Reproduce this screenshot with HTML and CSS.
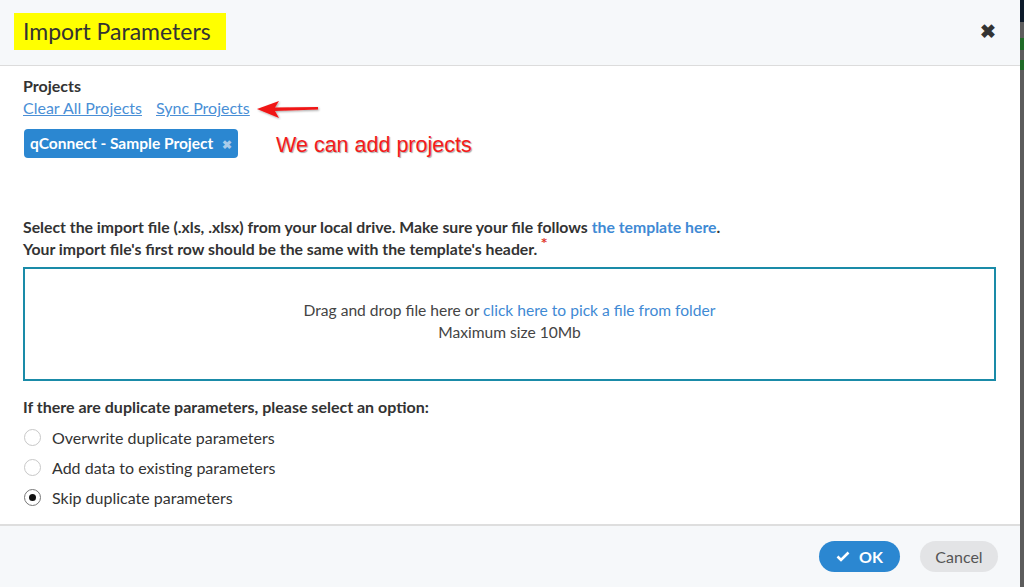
FILE: index.html
```html
<!DOCTYPE html>
<html>
<head>
<meta charset="utf-8">
<link rel="stylesheet" href="styles.css">
</head>
<body>
<div class="screen">
  <div class="modal">
    <header class="modal-header">
      <h1 class="title">Import Parameters</h1>
      <span class="close">&#10006;</span>
    </header>
    <main class="modal-body">
      <div class="label">Projects</div>
      <div class="links">
        <a class="link">Clear All Projects</a>
        <a class="link">Sync Projects</a>
        <svg class="arrow" width="66" height="20" viewBox="0 0 66 20"><defs><filter id="sh" x="-20%" y="-50%" width="140%" height="200%"><feDropShadow dx="1" dy="1" stdDeviation="1" flood-color="#000" flood-opacity="0.35"/></filter></defs><path d="M1 9 L23 1 L19 7.5 L62 7 L62 9.5 L19 11 L23 18 Z" fill="#f01818" filter="url(#sh)"/></svg>
      </div>
      <div class="tags">
        <span class="tag">qConnect - Sample Project <span class="tag-x">&#10006;</span></span>
        <span class="note">We can add projects</span>
      </div>
      <p class="instr">Select the import file (.xls, .xlsx) from your local drive. Make sure your file follows <a class="blue">the template here</a>.<br>Your import file's first row should be the same with the template's header. <span class="req">*</span></p>
      <div class="drop">
        <div>Drag and drop file here or <a class="blue">click here to pick a file from folder</a></div>
        <div>Maximum size 10Mb</div>
      </div>
      <div class="label dup">If there are duplicate parameters, please select an option:</div>
      <ul class="radios">
        <li><span class="radio"></span>Overwrite duplicate parameters</li>
        <li><span class="radio"></span>Add data to existing parameters</li>
        <li><span class="radio on"></span>Skip duplicate parameters</li>
      </ul>
    </main>
    <footer class="modal-footer">
      <button class="btn ok"><svg width="14" height="11" viewBox="0 0 14 11"><path d="M1.5 5.5 L5 9 L12.5 1.5" fill="none" stroke="#fff" stroke-width="2.6"/></svg>OK</button>
      <button class="btn cancel">Cancel</button>
    </footer>
  </div>
  <div class="edge">
    <div class="e1"></div><div class="e2"></div><div class="e3"></div><div class="e4"></div><div class="e5"></div>
  </div>
</div>
</body>
</html>
```
FILE: styles.css
```css
* { box-sizing: border-box; }
html, body { margin: 0; padding: 0; }
body { font-family: Lato, "Open Sans", sans-serif; color: #333; background: #fff; }
.screen { display: flex; width: 1024px; height: 587px; overflow: hidden; }
.modal { width: 1020px; display: flex; flex-direction: column; background: #fff; }
.modal-header { height: 66px; background: #f6f8fa; border-bottom: 1px solid #dcdcdc; display: flex; align-items: center; justify-content: space-between; padding: 0 24px 0 14px; flex: none; }
.title { margin: 0; background: #ffff00; font-weight: 400; font-size: 23px; color: #333; height: 37px; line-height: 37px; padding: 0 15px 0 9px; margin-top: -2px; }
.close { font-size: 19px; color: #333; font-weight: 700; margin-top: -4px; }
.modal-body { flex: 1; padding: 10px 23px 0 23px; }
.label { font-weight: 700; font-size: 16px; line-height: 20px; color: #333; }
.links { display: flex; align-items: center; height: 22px; font-size: 16px; }
.link { color: #4a8fd6; text-decoration: underline; margin-right: 14px; }
.arrow { margin-left: -8px; margin-top: 6px; }
.tags { display: flex; align-items: center; margin-top: 11px; height: 29px; }
.tag { background: #2b87d1; color: #fff; font-weight: 700; font-size: 15.5px; height: 29px; line-height: 29px; padding: 0 6px 0 6px; border-radius: 4px; margin-left: 1px; }
.tag-x { color: #a9cbe9; font-size: 12px; margin-left: 5px; }
.note { color: #f51a1a; font-family: "Liberation Sans", Arial, sans-serif; font-size: 21.5px; margin-left: 38px; margin-top: 4px; text-shadow: 1px 1px 1px rgba(0,0,0,0.35); }
.instr { margin: 58px 0 0 0; font-weight: 700; font-size: 15.8px; line-height: 22px; color: #333; }
.blue { color: #3f8ad4; }
.req { color: #e0362c; font-family: "DejaVu Sans", sans-serif; font-size: 11px; line-height: 0; position: relative; top: -9px; font-weight: 700; }
.drop { margin-top: 7px; height: 114px; border: 2px solid #1a8ba8; display: flex; flex-direction: column; align-items: center; justify-content: center; font-size: 15.6px; line-height: 22px; color: #444; width: 973px; padding-bottom: 6px; }
.drop .blue { color: #3f8ad4; }
.dup { margin-top: 16px; }
.radios { list-style: none; padding: 0; margin: 5px 0 0 0; }
.radios li { display: flex; align-items: center; height: 30px; font-size: 16px; color: #333; }
.radio { width: 17px; height: 17px; border: 1px solid #c8c8c8; border-radius: 50%; margin-right: 11px; margin-left: 1px; display: flex; align-items: center; justify-content: center; }
.radio.on { border-color: #777; }
.radio.on::after { content: ""; width: 7px; height: 7px; border-radius: 50%; background: #111; }
.modal-footer { height: 63px; background: #f6f8fa; border-top: 2px solid #dedede; display: flex; align-items: center; justify-content: flex-end; padding: 0 22px 0 0; gap: 20px; flex: none; }
.btn { height: 31px; border: none; border-radius: 16px; font-family: Lato, sans-serif; font-size: 16px; display: flex; align-items: center; justify-content: center; padding: 0; }
.ok { width: 81px; background: #2b87d1; color: #fff; font-weight: 700; gap: 9px; }
.cancel { width: 78px; background: #e3e4e6; color: #555; }
.edge { width: 4px; background: #5c5c5c; display: flex; flex-direction: column; }
.e1 { height: 22px; background: #0d1a2a; }
.e2 { height: 16px; }
.e3 { height: 12px; background: #1f6b28; }
.e4 { height: 10px; }
.e5 { height: 10px; background: #1f6b28; }
```
